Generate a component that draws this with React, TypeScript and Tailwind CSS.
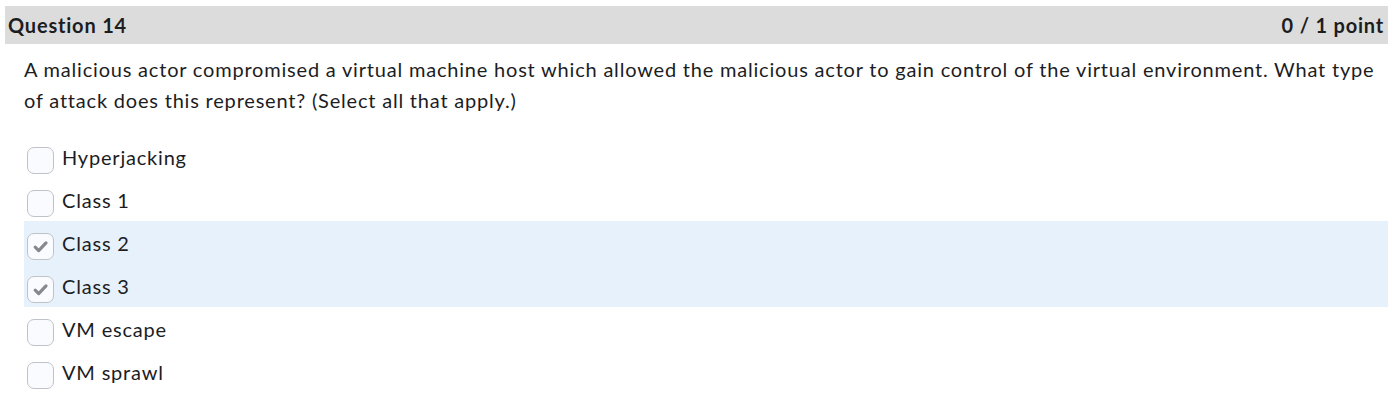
import React from 'react';

const options = [
  { label: 'Hyperjacking', checked: false },
  { label: 'Class 1', checked: false },
  { label: 'Class 2', checked: true },
  { label: 'Class 3', checked: true },
  { label: 'VM escape', checked: false },
  { label: 'VM sprawl', checked: false },
];

function Box({ checked }: { checked: boolean }) {
  return (
    <span className="flex h-[27px] w-[27px] shrink-0 translate-y-[4px] items-center justify-center rounded-[7px] border border-[#bfc3c7] bg-[#f9fbff]">
      {checked && (
        <svg width="17" height="17" viewBox="0 0 16 16" fill="none">
          <path d="M3 8.6l3.3 3.2L13.2 4.6" stroke="#85898e" strokeWidth="3" strokeLinecap="round" strokeLinejoin="round" />
        </svg>
      )}
    </span>
  );
}

export default function App() {
  return (
    <div className="min-h-[418px] bg-white pl-[5px] pr-[3px] pt-[6px] font-['Lato','Noto_Sans',sans-serif] tracking-[0.8px] text-[#1c1d1f]">
      <div className="flex h-[38px] items-center justify-between bg-[#dcdcdc] pl-[3px] pr-[4px] text-[20px] font-bold">
        <span>Question 14</span>
        <span>0 / 1 point</span>
      </div>
      <div className="pl-[19px] pt-[10px]">
        <p className="text-[20px] leading-[31px]">
          A malicious actor compromised a virtual machine host which allowed the malicious actor to gain control of the virtual environment. What type of attack does this represent? (Select all that apply.)
        </p>
        <div className="mt-[19px] flex flex-col">
          {options.map((o) => (
            <div
              key={o.label}
              className={`flex h-[43px] items-center gap-[8px] pl-[3px] ${o.checked ? 'bg-[#e7f1fc]' : ''}`}
            >
              <Box checked={o.checked} />
              <span className="text-[20px]">{o.label}</span>
            </div>
          ))}
        </div>
      </div>
    </div>
  );
}
